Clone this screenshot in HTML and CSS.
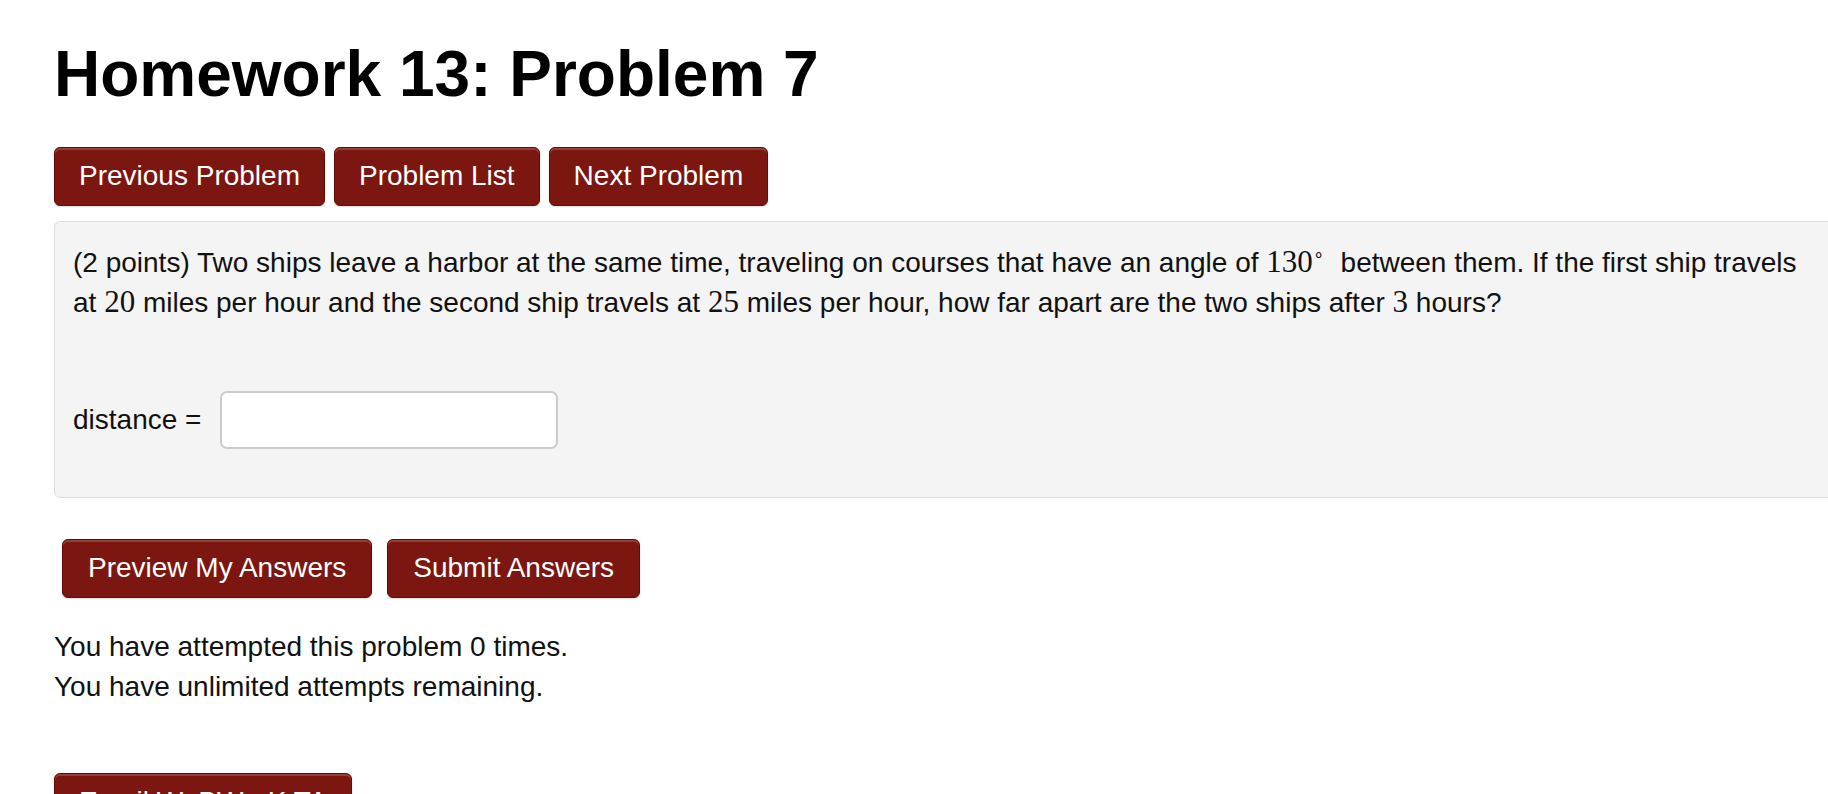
FILE: index.html
```html
<!DOCTYPE html>
<html lang="en">
<head>
<meta charset="utf-8">
<title>Homework 13: Problem 7</title>
<link rel="stylesheet" href="styles.css">
</head>
<body>
<main class="page">
  <h1 class="title">Homework 13: Problem 7</h1>
  <nav class="nav-row">
    <button class="btn">Previous Problem</button>
    <button class="btn">Problem List</button>
    <button class="btn">Next Problem</button>
  </nav>
  <section class="problem">
    <p class="statement">(2 points) Two ships leave a harbor at the same time, traveling on courses that have an angle of <span class="math">130<sup class="deg">&#8728;</sup></span> between them. If the first ship travels at <span class="math">20</span> miles per hour and the second ship travels at <span class="math">25</span> miles per hour, how far apart are the two ships after <span class="math">3</span> hours?</p>
    <div class="answer-row">
      <label class="answer-label" for="distance">distance =</label>
      <input class="answer-input" id="distance" type="text">
    </div>
  </section>
  <div class="submit-row">
    <button class="btn">Preview My Answers</button>
    <button class="btn">Submit Answers</button>
  </div>
  <div class="attempts">
    <p>You have attempted this problem 0 times.</p>
    <p>You have unlimited attempts remaining.</p>
  </div>
  <div class="email-row">
    <button class="btn">Email WeBWorK TA</button>
  </div>
</main>
</body>
</html>
```
FILE: styles.css
```css
html, body {
  margin: 0;
  padding: 0;
  overflow: hidden;
  background: #ffffff;
}

body {
  font-family: "Liberation Sans", Arial, Helvetica, sans-serif;
  font-size: 28px;
  line-height: 40px;
  color: #111111;
}

.page {
  padding-left: 54px;
}

.title {
  margin: 39px 0 0 0;
  font-size: 64px;
  line-height: 70px;
  font-weight: bold;
  color: #000000;
}

.nav-row {
  display: flex;
  gap: 9px;
  margin-top: 38px;
}

.btn {
  font-family: "Liberation Sans", Arial, Helvetica, sans-serif;
  font-size: 28px;
  line-height: 40px;
  color: #ffffff;
  background: #7b1610;
  border: 1px solid #5f0f0a;
  border-radius: 6px;
  padding: 8px 24px 9px;
  box-shadow: inset 0 2px 0 rgba(255, 255, 255, 0.18), 0 1px 2px rgba(0, 0, 0, 0.15);
  cursor: pointer;
}

.problem {
  margin-top: 15px;
  margin-right: -12px;
  background: #f4f4f4;
  border: 1px solid #dedede;
  border-radius: 6px;
  padding: 21px 18px 48px 18px;
}

.statement {
  margin: 0;
}

.math {
  font-family: "Liberation Serif", "Times New Roman", serif;
  font-size: 31px;
  line-height: 0;
}

.deg {
  font-size: 18px;
  vertical-align: 12px;
  line-height: 0;
  margin-left: 0;
  margin-right: 9px;
}

.answer-row {
  display: flex;
  align-items: center;
  gap: 19px;
  margin-top: 68px;
}

.answer-input {
  width: 338px;
  height: 58px;
  box-sizing: border-box;
  border: 2px solid #cccccc;
  border-radius: 7px;
  background: #ffffff;
  font-size: 28px;
  padding: 0 12px;
  margin: 0;
}

.submit-row {
  display: flex;
  gap: 15px;
  margin-top: 41px;
  padding-left: 8px;
}

.submit-row .btn {
  padding-left: 25px;
  padding-right: 25px;
}

.attempts {
  margin-top: 29px;
}

.attempts p {
  margin: 0;
}

.email-row {
  margin-top: 66px;
}
```
